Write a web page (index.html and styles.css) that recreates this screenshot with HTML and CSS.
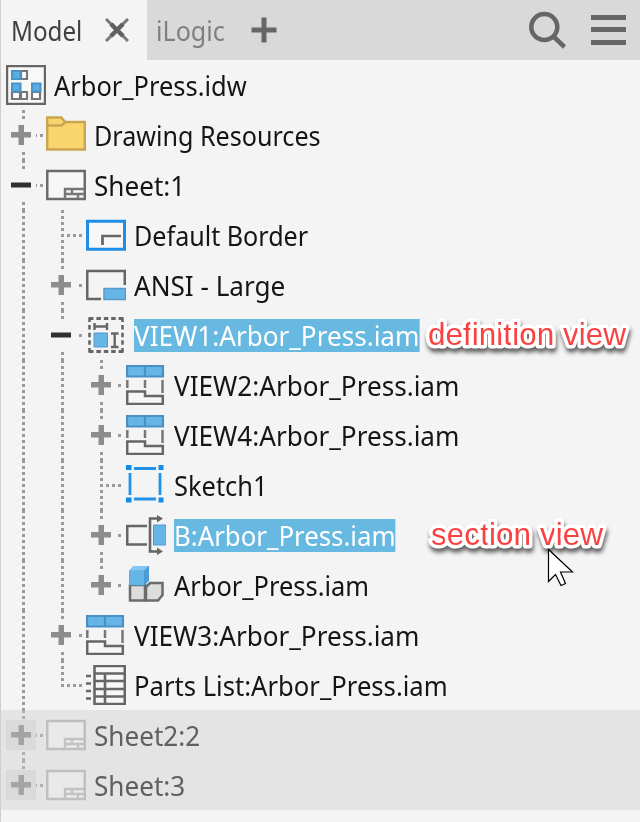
FILE: index.html
```html
<!DOCTYPE html>
<html lang="en">
<head>
<meta charset="utf-8">
<title>Model browser</title>
<link rel="stylesheet" href="styles.css">
</head>
<body>
<svg class="defs" aria-hidden="true">
  <defs>
    <!-- tree guides -->
    <g id="top" fill="#9a9a9a"><path d="M0 0h3v3h-3zM0 6h3v3h-3z"/></g>
    <g id="bottom" fill="#9a9a9a"><path d="M0 42h3v3h-3zM0 48h3v2h-3z"/></g>
    <g id="line" fill="#9a9a9a"><path d="M0 0h3v3h-3zM0 6h3v3h-3zM0 12h3v3h-3zM0 18h3v3h-3zM0 24h3v3h-3zM0 30h3v3h-3zM0 36h3v3h-3zM0 42h3v3h-3zM0 48h3v2h-3z"/></g>
    <g id="half" fill="#9a9a9a"><path d="M0 0h3v3h-3zM0 6h3v3h-3zM0 12h3v3h-3zM0 18h3v3h-3zM0 24h3v3h-3z"/></g>
    <g id="arm" fill="#9a9a9a"><path d="M6 24h3v3h-3zM12 24h3v3h-3zM18 24h3v3h-3z"/></g>
    <g id="stub" fill="#9a9a9a"><path d="M18 24h3v3h-3z"/></g>
    <g id="stub1" fill="#9a9a9a"><path d="M30 24h1v3h-1zM34 24h3v3h-3z"/></g>
    <path id="plus" fill="#8d8d8d" d="M12.500 15h5.500v7h7v5.500h-7v7.500h-5.500v-7.500H5v-5.500h7.500z"/>
    <path id="minus" fill="#303030" d="M5 22.500h20v5H5z"/>
    <!-- node icons, 40 x 40 -->
    <g id="idw"><path d="M1 1h38v38H1z" fill="#f8f8f8" stroke="#666" stroke-width="2.400"/>
      <path d="M15 6h6v8h-6zM6 27h8v7H6zM15 27h6v7h-6zM26 27h8v7h-8z" fill="#fff" stroke="#777" stroke-width="2.200"/>
      <path d="M6 6h8.500v8H6zM6 18.500h8.500v8H6zM26 18.500h8.500v8h-8.500z" fill="#5aade3" stroke="#4b92c9" stroke-width="2"/></g>
    <g id="folder"><path d="M1.200 35V3h14l4 4.500H38.800V35z" transform="translate(0 -.5)" fill="#f8d66d" stroke="#c9a550" stroke-width="2.400"/><path d="M1 10.500h14.500l4-3.500" fill="none" stroke="#c9a550" stroke-width="2.400"/></g>
    <g id="sheet"><path d="M1.200 6h37.600v28H1.200z" fill="#f7f7f7" stroke="#6b6b6b" stroke-width="2.600"/><path d="M38 24H19v10M19 29h19M26 24v5M32 29v5" fill="none" stroke="#777" stroke-width="2.400"/></g>
    <g id="border"><path d="M1.500 6.300h37v28h-37z" fill="#f7f7f7" stroke="#1e8ee6" stroke-width="3"/><path d="M16.500 30v-9h18.500" fill="none" stroke="#666" stroke-width="2.700"/></g>
    <g id="title"><path d="M15 34H1.200V6h37.600v14" fill="none" stroke="#666" stroke-width="2.600"/><path d="M18 23.500h21.500V34.500H18z" fill="#65b5e6" stroke="#5799cd" stroke-width="1.500"/></g>
    <g id="base"><path d="M3 3.500h34M3 36.500h34" fill="none" stroke="#666" stroke-width="2.800" stroke-dasharray="4.500 2.900"/><path d="M3.500 2.500v35M36.500 2.500v35" fill="none" stroke="#666" stroke-width="2.600" stroke-dasharray="4.500 3.100"/><path d="M8 11.500h13M8.500 8v7M21 8v7M25 18.500h7.500M28.700 19v13M25 32h7.500" fill="none" stroke="#666" stroke-width="2.400"/><path d="M8 18h13.500v14H8z" fill="#65b5e6" stroke="#5799cd"/></g>
    <g id="view"><path d="M1 1h36v10.500H1zM19 1v10.500" fill="#65b5e6" stroke="#4a90c6" stroke-width="2.200"/><path d="M1.300 15v8M19 15v8M36.500 15v13" fill="none" stroke="#777" stroke-width="2.500"/><path d="M1.200 26.500v12.500h35.600v-8H19v-4.500z" fill="#f7f7f7" stroke="#666" stroke-width="2.500"/></g>
    <g id="sketch" stroke="#2292e8" fill="#128ce8"><path d="M8 3.500h22M8 34h22M4 8v22M34 8v22" stroke-width="2.800"/><path stroke="none" d="M0 0h5.500v5H0zM32.500 0h5v5h-5zM0 32.500h5.500v5H0zM32.500 32.500h5v5h-5z"/></g>
    <g id="section"><path d="M21 11H1.200v18.500H21" fill="none" stroke="#666" stroke-width="2.600"/><path d="M27.500 10H40v20H27.500z" fill="#65b5e6" stroke="#5799cd" stroke-width="1"/><path d="M33 3.500h-9v33h9" fill="none" stroke="#666" stroke-width="2.600"/><path d="M31 0l6 3.500-6 4zM31 32.500l6 4-6 3.500z" fill="#666"/></g>
    <g id="assembly"><path d="M4 20h15v15.500H4z" fill="#ddd" stroke="#6b6b6b" stroke-width="2.500"/><path d="M20 22l4-4h12.500v12l-4.500 5.500H20z" fill="#ddd" stroke="#6b6b6b" stroke-width="2.500"/><path d="M3 6l4.500-5h15.500v14.500L18.500 20.500H3z" fill="#4c9bd6"/><path d="M3.500 5.500h14.500V20H3.500z" fill="#65b5e6"/><path d="M3 5.500l4.500-4.500h15L18 5.500z" fill="#82c8f4"/></g>
    <g id="list"><path d="M8.500 1h30.300v38H8.500zM8.500 8.500h30M8.500 16h30M8.500 24h30M8.500 31.500h30M19 8.500V39" fill="#f7f7f7" stroke="#666" stroke-width="2.600"/><path d="M0 11h5M0 18.500h5M0 26h5M0 33.500h5" stroke="#666" stroke-width="2.600"/></g>
  </defs>
</svg>

<main class="panel">
  <header class="tabs">
    <div class="tab active"><span class="text narrow">Model</span>
      <svg class="close" viewBox="0 0 24 24"><path d="M1 1l22 22M23 1L1 23" stroke="#777" stroke-width="3"/><path d="M6 6l12 12M18 6L6 18" stroke="#606060" stroke-width="4.500"/></svg>
    </div>
    <div class="tab"><span class="text snug">iLogic</span></div>
    <svg class="add" viewBox="0 0 26 26"><path d="M13 0.500v25M0.500 13h25" stroke="#666" stroke-width="5"/></svg>
    <svg class="search" viewBox="0 0 40 40"><circle cx="15.300" cy="17" r="13" fill="none" stroke="#666" stroke-width="4.500"/><path d="M24.500 26.500l11 10.500" stroke="#666" stroke-width="4.500"/></svg>
    <svg class="menu" viewBox="0 0 35 30"><path d="M0 2.500h35M0 14.500h35M0 27.500h35" stroke="#666" stroke-width="5"/></svg>
  </header>

  <section class="tree">
    <div class="row"><svg class="icon"><use href="#idw"/></svg><span class="text">Arbor_Press.idw</span></div>

    <div class="row"><svg class="cell"><use href="#top" x="16"/><use href="#bottom" x="16"/><use href="#plus"/><use href="#stub1"/></svg><svg class="icon"><use href="#folder"/></svg><span class="text snug">Drawing Resources</span></div>

    <div class="row"><svg class="cell"><use href="#top" x="16"/><use href="#bottom" x="16"/><use href="#minus"/><use href="#stub1"/></svg><svg class="icon"><use href="#sheet"/></svg><span class="text wide">Sheet:1</span></div>

    <div class="row"><svg class="cell"><use href="#line" x="16"/></svg><svg class="cell"><use href="#line" x="15"/><use href="#arm" x="15"/></svg><svg class="icon"><use href="#border"/></svg><span class="text snug">Default Border</span></div>

    <div class="row"><svg class="cell"><use href="#line" x="16"/></svg><svg class="cell"><use href="#top" x="15"/><use href="#bottom" x="15"/><use href="#plus"/><use href="#stub" x="15"/></svg><svg class="icon"><use href="#title"/></svg><span class="text wide">ANSI - Large</span></div>

    <div class="row"><svg class="cell"><use href="#line" x="16"/></svg><svg class="cell"><use href="#top" x="15"/><use href="#bottom" x="15"/><use href="#minus"/><use href="#stub" x="15"/></svg><svg class="icon"><use href="#base"/></svg><span class="text wide selected">VIEW1:Arbor_Press.iam</span>
      <svg class="note definition" viewBox="0 0 216 44"><text x="8" y="30" textLength="198">definition view</text></svg></div>

    <div class="row"><svg class="cell"><use href="#line" x="16"/></svg><svg class="cell"><use href="#line" x="15"/></svg><svg class="cell"><use href="#top" x="14"/><use href="#bottom" x="14"/><use href="#plus"/><use href="#stub" x="14"/></svg><svg class="icon"><use href="#view"/></svg><span class="text wide">VIEW2:Arbor_Press.iam</span></div>

    <div class="row"><svg class="cell"><use href="#line" x="16"/></svg><svg class="cell"><use href="#line" x="15"/></svg><svg class="cell"><use href="#top" x="14"/><use href="#bottom" x="14"/><use href="#plus"/><use href="#stub" x="14"/></svg><svg class="icon"><use href="#view"/></svg><span class="text wide">VIEW4:Arbor_Press.iam</span></div>

    <div class="row"><svg class="cell"><use href="#line" x="16"/></svg><svg class="cell"><use href="#line" x="15"/></svg><svg class="cell"><use href="#line" x="14"/><use href="#arm" x="14"/></svg><svg class="icon"><use href="#sketch"/></svg><span class="text">Sketch1</span></div>

    <div class="row"><svg class="cell"><use href="#line" x="16"/></svg><svg class="cell"><use href="#line" x="15"/></svg><svg class="cell"><use href="#top" x="14"/><use href="#bottom" x="14"/><use href="#plus"/><use href="#stub" x="14"/></svg><svg class="icon"><use href="#section"/></svg><span class="text loose selected">B:Arbor_Press.iam</span>
      <svg class="note section" viewBox="0 0 190 44"><text x="8" y="30" textLength="172">section view</text></svg>
      <svg class="cursor" viewBox="0 0 27 40"><path d="M1.500 1.500v32l7-7 5.500 11 4.500-2-5-11.500h12z" fill="#fff" stroke="#000" stroke-width="1.200"/></svg></div>

    <div class="row"><svg class="cell"><use href="#line" x="16"/></svg><svg class="cell"><use href="#line" x="15"/></svg><svg class="cell"><use href="#top" x="14"/><use href="#plus"/><use href="#stub" x="14"/></svg><svg class="icon"><use href="#assembly"/></svg><span class="text">Arbor_Press.iam</span></div>

    <div class="row"><svg class="cell"><use href="#line" x="16"/></svg><svg class="cell"><use href="#top" x="15"/><use href="#bottom" x="15"/><use href="#plus"/><use href="#stub" x="15"/></svg><svg class="icon"><use href="#view"/></svg><span class="text wide">VIEW3:Arbor_Press.iam</span></div>

    <div class="row"><svg class="cell"><use href="#line" x="16"/></svg><svg class="cell"><use href="#half" x="15"/><use href="#arm" x="15"/></svg><svg class="icon"><use href="#list"/></svg><span class="text parts">Parts List:Arbor_Press.iam</span></div>

    <div class="row inactive"><svg class="cell"><path class="box" d="M0 10h30v30H0z"/><use href="#top" x="16"/><use href="#bottom" x="16"/><use href="#plus"/><use href="#stub1"/></svg><svg class="icon"><use href="#sheet"/></svg><span class="text wide">Sheet2:2</span></div>

    <div class="row inactive"><svg class="cell"><path class="box" d="M0 10h30v30H0z"/><use href="#top" x="16"/><use href="#plus"/><use href="#stub1"/></svg><svg class="icon"><use href="#sheet"/></svg><span class="text wide">Sheet:3</span></div>
  </section>
</main>
</body>
</html>
```
FILE: styles.css
```css
* { box-sizing: border-box; }

body {
  margin: 0;
  background: #f4f4f4;
  color: #151515;
  font: 27.5px/33px "Noto Sans", Tahoma, sans-serif;
}

.defs { position: absolute; width: 0; height: 0; }

.panel {
  height: 822px;
  overflow: hidden;
  border-left: 1px solid #cfcfcf;
}

.text {
  flex: none;
  white-space: nowrap;
  transform: scaleX(.925);
  transform-origin: left;
}

.text.narrow { transform: scaleX(.88); }
.text.snug { transform: scaleX(.913); }
.text.parts { transform: scaleX(.932); }
.text.loose { transform: scaleX(.938); }
.text.wide { transform: scaleX(.949); }

.tabs {
  display: flex;
  align-items: center;
  height: 60px;
  padding-right: 14px;
  background: #d9d9d9;
}

.tab {
  display: flex;
  align-items: center;
  height: 60px;
  width: 108px;
  padding-left: 9px;
  color: #808080;
}

.tab.active {
  justify-content: space-between;
  width: 146px;
  padding: 0 18px 0 10px;
  background: #f4f4f4;
  color: #404040;
}

.close { flex: none; width: 24px; height: 24px; }
.add { width: 26px; height: 26px; margin-left: -4px; }
.search { width: 40px; height: 40px; margin-left: auto; }
.menu { width: 35px; height: 30px; margin-left: 22px; }

.row {
  position: relative;
  display: flex;
  align-items: center;
  height: 50px;
  padding-left: 5px;
}

.cell { flex: none; width: 40px; height: 50px; }
.icon { flex: none; width: 40px; height: 40px; margin-right: 8px; }

.selected { background: #67b9e2; color: #fff; }

.inactive { background: #e4e4e4; color: #606060; }
.inactive .cell use { opacity: .7; }
.inactive .icon { opacity: .3; }
.box { fill: #dadada; }

/* callouts and pointer lying over the tree */
.note {
  position: absolute;
  height: 44px;
  overflow: visible;
  filter: drop-shadow(1px 4px 2px rgba(0, 0, 0, .6));
}

.note text {
  font: 31.5px "Liberation Sans", Arial, sans-serif;
  fill: #fb4242;
  stroke: #fff;
  stroke-width: 7px;
  stroke-linejoin: round;
  paint-order: stroke;
}

.definition { left: 419px; top: 5px; width: 216px; }
.section { left: 422px; top: 5px; width: 190px; }
.cursor { position: absolute; left: 546px; top: 38px; width: 27px; height: 40px; z-index: 1; }
```
